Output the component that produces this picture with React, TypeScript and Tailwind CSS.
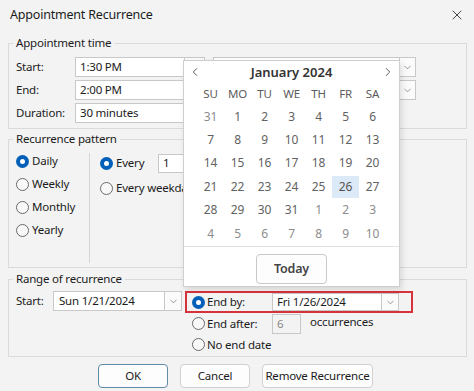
import React from 'react';
import { X, ChevronDown, ChevronLeft, ChevronRight } from 'lucide-react';

const Radio: React.FC<{ checked?: boolean }> = ({ checked }) =>
  checked ? (
    <span className="flex h-[13px] w-[13px] shrink-0 items-center justify-center rounded-full bg-[#005fb8]">
      <span className="h-[5px] w-[5px] rounded-full bg-white" />
    </span>
  ) : (
    <span className="h-[13px] w-[13px] shrink-0 rounded-full border border-[#6b6b6b] bg-[#f8f8f8]" />
  );

const DropBtn: React.FC<{ className?: string }> = ({ className = '' }) => (
  <div className={`flex items-center justify-center border border-[#c8c8c8] bg-[#fbfbfb] ${className}`}>
    <ChevronDown size={11} strokeWidth={1.25} className="text-[#555]" />
  </div>
);

const weeks = [
  [31, 1, 2, 3, 4, 5, 6],
  [7, 8, 9, 10, 11, 12, 13],
  [14, 15, 16, 17, 18, 19, 20],
  [21, 22, 23, 24, 25, 26, 27],
  [28, 29, 30, 31, 1, 2, 3],
  [4, 5, 6, 7, 8, 9, 10],
];

const CalendarPopup: React.FC = () => (
  <div className="absolute left-[183px] top-[60px] flex h-[227px] w-[217px] flex-col border border-[#cfcfcf] bg-white shadow-[2px_3px_6px_rgba(0,0,0,0.12)]">
    {/* Month header */}
    <div className="flex h-[22px] items-center justify-between px-[4px]">
      <ChevronLeft size={14} strokeWidth={1.5} className="text-[#444]" />
      <span className="text-[13px] font-semibold tracking-normal text-[#333]">January 2024</span>
      <ChevronRight size={14} strokeWidth={1.5} className="text-[#444]" />
    </div>
    <div className="grid h-[22px] grid-cols-7 px-[13px] text-[11.5px] text-[#5c5c5c]">
      {['SU', 'MO', 'TU', 'WE', 'TH', 'FR', 'SA'].map((d) => (
        <span key={d} className="flex items-center justify-center">{d}</span>
      ))}
    </div>
    <div className="grid grid-cols-7 px-[13px] text-[12px]">
      {weeks.map((week, wi) =>
        week.map((day, di) => {
          const other = (wi === 0 && day > 20) || (wi >= 4 && day < 15);
          const selected = wi === 3 && day === 26;
          return (
            <div key={`${wi}-${di}`} className="flex h-[23.4px] items-center justify-center">
              <span
                className={`flex h-[22px] w-full items-center justify-center ${
                  selected ? 'bg-[#dce9f7] text-[#555]' : other ? 'text-[#8c8c8c]' : 'text-[#626262]'
                }`}
              >
                {day}
              </span>
            </div>
          );
        })
      )}
    </div>
    <div className="mt-[1px] flex justify-center border-t border-[#e2e2e2] pt-[7px]">
      <button className="h-[30px] w-[71px] rounded-[4px] border border-[#c9c9c9] bg-[#fdfdfd] text-[12.5px] font-semibold text-[#444]">
        Today
      </button>
    </div>
  </div>
);

const Field: React.FC<{ className?: string; children?: React.ReactNode }> = ({ className = '', children }) => (
  <div className={`flex items-center border border-[#c8c8c8] bg-white pl-[4px] ${className}`}>{children}</div>
);

export default function App() {
  return (
    <div className="relative h-[391px] w-[474px] overflow-hidden bg-[#f3f3f3] font-['Noto_Sans',sans-serif] text-[11.5px] leading-[16px] tracking-[-0.2px] text-[#1b1b1b]">
      {/* Title bar */}
      <div className="flex h-[30px] items-center justify-between pl-[10px] pr-[9px]">
        <span className="text-[12.5px]">Appointment Recurrence</span>
        <X size={16} strokeWidth={1.25} className="text-[#222]" />
      </div>

      {/* Appointment time */}
      <fieldset className="ml-[8px] mt-[5px] w-[459px] border border-[#dadada] pb-[5px] pl-[7px]">
        <legend className="-ml-[3px] px-[3px]">Appointment time</legend>
        <div className="mt-[6px] flex flex-col gap-[3px]">
          {[
            ['Start:', '1:30 PM', true],
            ['End:', '2:00 PM', true],
            ['Duration:', '30 minutes', false],
          ].map(([label, value, wide]) => (
            <div key={label as string} className="flex h-[20px] items-stretch">
              <span className="flex w-[59px] items-center">{label}</span>
              <Field className="w-[110px]">{value}</Field>
              <DropBtn className="w-[20px] border-l-0" />
              {wide && (
                <>
                  <Field className="ml-[8px] w-[187px]" />
                  <DropBtn className="w-[16px] border-l-0" />
                </>
              )}
            </div>
          ))}
        </div>
      </fieldset>

      {/* Recurrence pattern */}
      <fieldset className="ml-[8px] mt-[2px] w-[459px] border border-[#dadada] pl-[7px]">
        <legend className="-ml-[3px] px-[3px]">Recurrence pattern</legend>
        <div className="flex">
          <div className="mt-[4px] flex w-[73px] flex-col gap-[3px] pb-[27px]">
            {['Daily', 'Weekly', 'Monthly', 'Yearly'].map((r, i) => (
              <label key={r} className="flex h-[20px] items-center gap-[3px]">
                <Radio checked={i === 0} />
                <span>{r}</span>
              </label>
            ))}
          </div>
          <div className="mb-[4px] mt-[6px] w-px bg-[#d4d4d4]" />
          <div className="mt-[6px] flex flex-col gap-[5px] pl-[10px]">
            <div className="flex h-[20px] items-center">
              <Radio checked />
              <span className="ml-[3px] w-[42px]">Every</span>
              <Field className="h-[19px] w-[40px]">1</Field>
            </div>
            <div className="flex h-[20px] items-center">
              <Radio />
              <span className="ml-[3px]">Every weekday</span>
            </div>
          </div>
        </div>
      </fieldset>

      {/* Range of recurrence */}
      <fieldset className="ml-[8px] mt-[3px] w-[459px] border border-[#dadada] pb-[1px] pl-[7px]">
        <legend className="-ml-[3px] px-[3px]">Range of recurrence</legend>
        <div className="mt-[4px] flex items-start">
          <div className="flex h-[20px] items-stretch">
            <span className="flex w-[37px] items-center">Start:</span>
            <Field className="w-[112px] pl-[5px]">Sun 1/21/2024</Field>
            <DropBtn className="ml-[-1px] w-[18px]" />
          </div>
          <div className="ml-[3px] flex flex-col">
            <div className="flex h-[22px] w-[228px] items-center border-2 border-[#d5333c] pl-[5px]">
              <Radio checked />
              <span className="ml-[2px] w-[65px]">End by:</span>
              <Field className="h-[18px] w-[110px] pl-[3px]">Fri 1/26/2024</Field>
              <DropBtn className="h-[18px] w-[17px] border-l-0" />
            </div>
            <div className="flex h-[21px] items-center pl-[7px]">
              <Radio />
              <span className="ml-[2px] w-[65px]">End after:</span>
              <div className="flex h-[20px] w-[29px] items-center border border-[#c8c8c8] bg-[#f3f3f3] pl-[4px] text-[#8a8a8a]">
                6
              </div>
              <span className="-mt-[3px] ml-[9px]">occurrences</span>
            </div>
            <div className="flex h-[21px] items-center pl-[7px]">
              <Radio />
              <span className="ml-[2px]">No end date</span>
            </div>
          </div>
        </div>
      </fieldset>

      {/* Buttons */}
      <div className="mt-[7px] flex gap-[12px] pl-[98px]">
        <button className="h-[24px] w-[70px] rounded-[4px] border border-[#5f8aa8] bg-[#fdfdfd]">OK</button>
        <button className="h-[24px] w-[70px] rounded-[4px] border border-[#d0d0d0] bg-[#fdfdfd]">Cancel</button>
        <button className="h-[24px] w-[111px] whitespace-nowrap rounded-[4px] border border-[#d0d0d0] bg-[#fdfdfd]">
          Remove Recurrence
        </button>
      </div>

      <CalendarPopup />
    </div>
  );
}
